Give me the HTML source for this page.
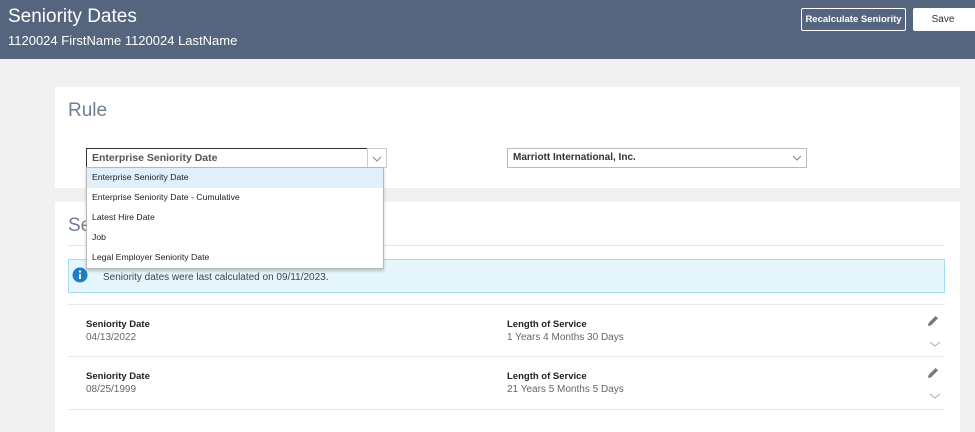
<!DOCTYPE html>
<html><head><meta charset="utf-8"><style>
*{box-sizing:border-box;margin:0;padding:0}
body{width:975px;height:422px;overflow:hidden;background:#f1f1f1;font-family:"Liberation Sans",sans-serif;position:relative}
.abs{position:absolute;white-space:nowrap}
.hdr{left:0;top:0;width:975px;height:59px;background:#56657e}
.t1{left:8px;top:6px;color:#fff;font-size:19px;font-weight:300}
.t2{left:8px;top:33px;color:#fff;font-size:13px}
.b1{left:801px;top:8px;width:105px;height:23px;border:1px solid #fff;border-radius:2px;color:#fff;font-size:9.5px;font-weight:bold;text-align:center;line-height:21px}
.b2{left:913px;top:8px;width:70px;height:23px;background:#fff;border-radius:2px;color:#333;font-size:10px;text-align:center;line-height:23px;padding-right:10px}
.card{background:#fff;left:55px;width:905px}
.sel{height:20px;border:1px solid #999;font-size:10.5px;color:#555;font-weight:bold;padding-left:5px;line-height:18px;background:#fff}
.dd{left:86px;top:167px;width:298px;height:102px;background:#fff;border:1px solid #b8b8b8;box-shadow:0 2px 3px rgba(0,0,0,.2)}
.dd div{height:20px;line-height:19px;font-size:8.7px;color:#222;padding-left:5px}
.lbl{font-size:9.5px;font-weight:bold;color:#222}
.val{font-size:10px;color:#666}
.line{height:1px;background:#e3e8ec;left:68px;width:877px}
</style></head><body>
<div class="abs hdr"></div>
<div class="abs t1">Seniority Dates</div>
<div class="abs t2">1120024 FirstName 1120024 LastName</div>
<div class="abs b1">Recalculate Seniority</div>
<div class="abs b2">Save</div>

<div class="abs card" style="top:87px;height:101px"></div>
<div class="abs" style="left:68px;top:100px;font-size:19px;font-weight:300;color:#6f7d96">Rule</div>
<div class="abs sel" style="left:86px;top:148px;width:282px;border-color:#333">Enterprise Seniority Date</div>
<div class="abs" style="left:367px;top:148px;width:20px;height:20px;border:1px solid #ccc;background:#fff"><svg width="18" height="18" viewBox="0 0 18 18"><path d="M5 8l4 4 4-4" fill="none" stroke="#888" stroke-width="1"/></svg></div>
<div class="abs sel" style="left:507px;top:148px;width:300px;border-color:#bbb;color:#333;font-size:10px">Marriott International, Inc.</div>
<svg class="abs" style="left:789px;top:150px" width="16" height="16" viewBox="0 0 16 16"><path d="M4 6l4 4 4-4" fill="none" stroke="#888" stroke-width="1"/></svg>

<div class="abs card" style="top:202px;height:230px"></div>
<div class="abs" style="left:68px;top:215px;font-size:19px;font-weight:300;color:#6f7d96">Se</div>
<div class="abs line" style="top:245px"></div>
<div class="abs" style="left:68px;top:259px;width:877px;height:34px;background:#e4f5fc;border:1px solid #a6dbef"></div>
<svg class="abs" style="left:72px;top:267px" width="16" height="16" viewBox="0 0 16 16"><circle cx="8" cy="8" r="7.5" fill="#1a7fc4"/><rect x="7" y="7" width="2" height="5" fill="#fff"/><circle cx="8" cy="4.6" r="1.2" fill="#fff"/></svg>
<div class="abs" style="left:103px;top:272px;font-size:10px;color:#444">Seniority dates were last calculated on 09/11/2023.</div>
<div class="abs line" style="top:304px"></div>
<div class="abs lbl" style="left:86px;top:319px">Seniority Date</div>
<div class="abs val" style="left:86px;top:332px">04/13/2022</div>
<div class="abs lbl" style="left:507px;top:319px">Length of Service</div>
<div class="abs val" style="left:507px;top:332px">1 Years 4 Months 30 Days</div>
<div class="abs line" style="top:356px"></div>
<div class="abs lbl" style="left:86px;top:371px">Seniority Date</div>
<div class="abs val" style="left:86px;top:384px">08/25/1999</div>
<div class="abs lbl" style="left:507px;top:371px">Length of Service</div>
<div class="abs val" style="left:507px;top:384px">21 Years 5 Months 5 Days</div>
<div class="abs line" style="top:409px"></div>
<svg class="abs" style="left:926px;top:314px" width="14" height="14" viewBox="0 0 14 14"><path d="M2 12l0.6-3 7-7 2.4 2.4-7 7z" fill="#777"/></svg>
<svg class="abs" style="left:929px;top:339px" width="12" height="10" viewBox="0 0 12 10"><path d="M1 3l5 4 5-4" fill="none" stroke="#aaa" stroke-width="1"/></svg>
<svg class="abs" style="left:926px;top:366px" width="14" height="14" viewBox="0 0 14 14"><path d="M2 12l0.6-3 7-7 2.4 2.4-7 7z" fill="#777"/></svg>
<svg class="abs" style="left:929px;top:391px" width="12" height="10" viewBox="0 0 12 10"><path d="M1 3l5 4 5-4" fill="none" stroke="#aaa" stroke-width="1"/></svg>

<div class="abs dd">
<div style="background:#e1effa">Enterprise Seniority Date</div>
<div>Enterprise Seniority Date - Cumulative</div>
<div>Latest Hire Date</div>
<div>Job</div>
<div>Legal Employer Seniority Date</div>
</div>
</body></html>
